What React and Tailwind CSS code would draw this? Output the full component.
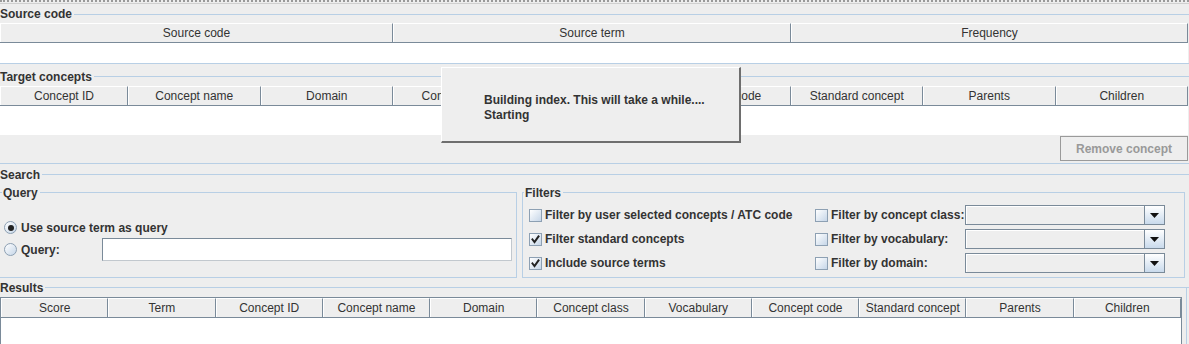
import React from 'react';

const SOURCE_COLS = ['Source code', 'Source term', 'Frequency'];
const TARGET_COLS = ['Concept ID', 'Concept name', 'Domain', 'Concept class', 'Vocabulary', 'Concept code', 'Standard concept', 'Parents', 'Children'];
const RESULT_COLS = ['Score', 'Term', 'Concept ID', 'Concept name', 'Domain', 'Concept class', 'Vocabulary', 'Concept code', 'Standard concept', 'Parents', 'Children'];

const Title = ({ children, lead, className = 'h-[17px]' }) => (
  <div className={`flex items-center ${className}`}>
    {lead && <div className="w-[2px] h-px bg-[#b8cfe5] mr-px" />}
    <span className="font-bold text-[#333333] leading-none pr-[2px]">{children}</span>
    <div className="flex-1 h-px bg-[#b8cfe5]" />
  </div>
);

const HeaderCell = ({ label, className = 'flex-1' }) => (
  <div className={`${className} min-w-0 h-full flex items-center justify-center border-r border-[#7a8a99] border-l border-l-white border-t border-t-white whitespace-nowrap overflow-hidden`}>
    {label}
  </div>
);

const CheckBox = ({ checked }) => (
  <div className="w-[13px] h-[13px] flex-none border border-[#8da0b3] bg-gradient-to-br from-white to-[#c6d6e8] flex items-center justify-center">
    {checked && (
      <svg width="9" height="9" viewBox="0 0 9 9">
        <path d="M1.5 4.5 L3.5 7 L7.5 1.5" fill="none" stroke="#222" strokeWidth="2" strokeLinecap="square" />
      </svg>
    )}
  </div>
);

const Radio = ({ checked }) => (
  <div className="w-[13px] h-[13px] flex-none rounded-full border border-[#8da0b3] bg-gradient-to-br from-white to-[#c6d6e8] flex items-center justify-center">
    {checked && <div className="w-[6px] h-[6px] rounded-full bg-[#222]" />}
  </div>
);

const Combo = () => (
  <div className="flex h-[20px] w-[200px]">
    <div className="w-[180px] h-full border border-[#7a8a99] bg-[#eeeeee] shadow-[inset_1px_1px_0_#ffffff]" />
    <div className="w-[20px] h-full border border-l-0 border-[#7a8a99] bg-gradient-to-b from-white to-[#c9daec] flex items-center justify-center">
      <svg width="9" height="5" viewBox="0 0 9 5">
        <path d="M0 0 H9 L4.5 5 Z" fill="#111" />
      </svg>
    </div>
  </div>
);

const CheckRow = ({ checked, label, className = '' }) => (
  <div className={`flex items-center gap-[3px] font-bold ${className}`}>
    <CheckBox checked={checked} />
    <span className="whitespace-nowrap">{label}</span>
  </div>
);

export default function App() {
  return (
    <div className="relative w-[1189px] h-[344px] overflow-hidden bg-[#eeeeee] text-[12px] text-[#333333] font-['Liberation_Sans',Arial,sans-serif]">
      {/* split pane edge */}
      <div className="h-[2px] border-t-2 border-dotted border-[#9a9a9a]" />
      <div className="h-px mt-px bg-[#d0d0d0]" />
      <div className="h-px" />

      {/* Source code */}
      <Title className="h-[18px]">Source code</Title>
      <div className="w-[1188px]">
        <div className="flex h-[20px] border-b border-[#7a8a99]">
          <HeaderCell label={SOURCE_COLS[0]} className="w-[393px] flex-none" />
          <HeaderCell label={SOURCE_COLS[1]} className="w-[398px] flex-none" />
          <HeaderCell label={SOURCE_COLS[2]} />
        </div>
        <div className="h-[20px] bg-white" />
      </div>
      <div className="h-px bg-[#b8cfe5]" />
      <div className="h-[3px]" />

      {/* Target concepts */}
      <Title className="h-[19px]">Target concepts</Title>
      <div className="w-[1188px]">
        <div className="flex h-[20px] border-b border-[#7a8a99]">
          <HeaderCell label={TARGET_COLS[0]} className="w-[128px] flex-none" />
          {TARGET_COLS.slice(1).map((c) => (
            <HeaderCell key={c} label={c} />
          ))}
        </div>
        <div className="h-[29px] bg-white" />
      </div>
      <div className="flex justify-end items-start h-[28px] pt-px pr-px">
        <button className="w-[128px] h-[25px] border border-[#9a9a9a] bg-[#eeeeee] font-bold text-[#999999]">
          Remove concept
        </button>
      </div>
      <div className="h-px bg-[#b8cfe5]" />
      <div className="h-[2px]" />

      {/* Search */}
      <Title>Search</Title>
      <div className="h-px" />
      <div className="flex h-[94px]">
        {/* Query */}
        <div className="w-[517px] flex flex-col">
          <Title lead>Query</Title>
          <div className="flex-1 -mt-[9px] pt-[9px] border-r border-b border-[#b8cfe5] flex flex-col">
            <div className="h-[16px]" />
            <div className="flex items-center h-[21px] pl-[4px] gap-[4px] font-bold">
              <Radio checked />
              <span>Use source term as query</span>
            </div>
            <div className="flex items-center h-[23px] pl-[4px] font-bold">
              <Radio />
              <span className="ml-[4px] w-[81px]">Query:</span>
              <div className="w-[410px] h-[23px] bg-white border border-[#7a8a99] border-b-[#c2c8ce] border-r-[#c2c8ce]" />
            </div>
          </div>
        </div>
        <div className="w-[5px]" />
        {/* Filters */}
        <div className="w-[663px] flex flex-col">
          <Title lead>Filters</Title>
          <div className="flex-1 -mt-[9px] pt-[9px] border-l border-r border-b border-[#b8cfe5] flex flex-col pl-[6px]">
            <div className="h-[2px]" />
            <div className="flex items-center h-[24px]">
              <CheckRow label="Filter by user selected concepts / ATC code" className="w-[286px]" />
              <CheckRow label="Filter by concept class:" className="w-[150px]" />
              <Combo />
            </div>
            <div className="flex items-center h-[24px]">
              <CheckRow checked label="Filter standard concepts" className="w-[286px]" />
              <CheckRow label="Filter by vocabulary:" className="w-[150px]" />
              <Combo />
            </div>
            <div className="flex items-center h-[24px]">
              <CheckRow checked label="Include source terms" className="w-[286px]" />
              <CheckRow label="Filter by domain:" className="w-[150px]" />
              <Combo />
            </div>
          </div>
        </div>
      </div>

      {/* Results */}
      <div className="h-px" />
      <Title>Results</Title>
      <div className="w-[1187px] -mt-[9px] pt-[10px] border-r border-[#b8cfe5]">
        <div className="w-[1182px] border border-[#7a8a99]">
          <div className="flex h-[20px] border-b border-[#7a8a99]">
            {RESULT_COLS.map((c) => (
              <HeaderCell key={c} label={c} />
            ))}
          </div>
          <div className="h-[40px] bg-white" />
        </div>
      </div>

      {/* Progress dialog */}
      <div className="absolute left-[441px] top-[67px] w-[300px] h-[76px] bg-[#eeeeee] border-t border-l border-white border-r-2 border-b-2 border-r-[#6e6e6e] border-b-[#6e6e6e] pl-[42px] pt-[25px] font-bold leading-[15px]">
        <div>Building index. This will take a while....</div>
        <div>Starting</div>
      </div>
    </div>
  );
}
